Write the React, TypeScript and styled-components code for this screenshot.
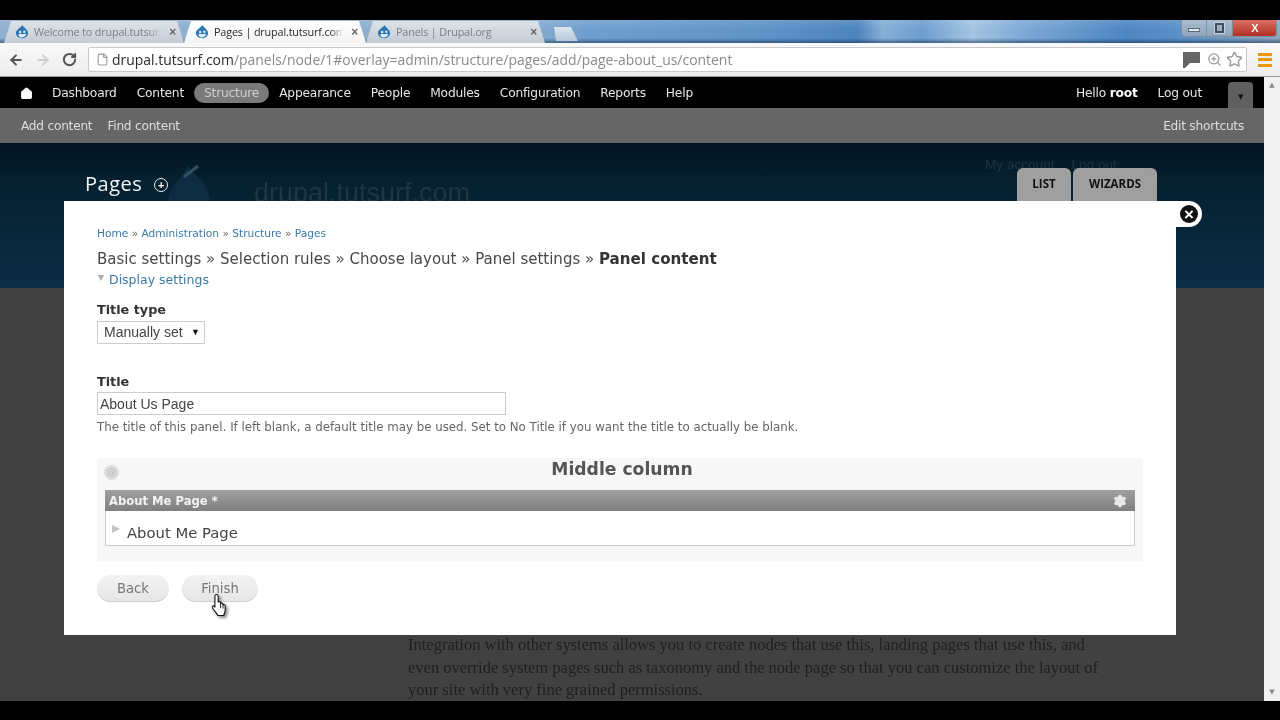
import React from "react";
import styled, { createGlobalStyle } from "styled-components";
import { ArrowLeft, ArrowRight, RotateCw, File, ZoomIn, Star, Home, Settings } from "lucide-react";

const Global = createGlobalStyle`
  html, body { margin: 0; padding: 0; background: #000; width: 1280px; height: 720px; overflow: hidden; }
  * { box-sizing: border-box; }
`;
const Screen = styled.div`
  width: 1280px; height: 720px; display: flex; flex-direction: column; background: #000;
  font-family: "DejaVu Sans", sans-serif; filter: blur(0.4px);
`;
const Letterbox = styled.div<{ $h: number }>`
  height: ${(p) => p.$h}px; flex: none; background: #000;
`;
const TabStrip = styled.div`
  height: 23px; flex: none; display: flex; align-items: flex-end; padding-left: 4px; position: relative;
  background:
    linear-gradient(rgba(255,255,255,.12) 0, rgba(255,255,255,0) 40%, rgba(0,0,0,0) 78%, rgba(20,45,75,.55) 100%),
    linear-gradient(90deg, #8fb0cf 0, #8fb0cf 40%, #6f9fd0 46%, #5f92c8 60%, #4d84bd 67%, #86b0d8 69%, #6d9dcf 72%, #a3c4e2 76%, #7da8d6 80%, #4c86c2 88%, #5a90c8 92%, #8fa8c0 100%);
`;
const Tab = styled.div<{ $active?: boolean; $w: number }>`
  width: ${(p) => p.$w}px; height: 22px; display: flex; align-items: center; gap: 5px; padding: 0 8px 1px 11px; flex: none;
  background: ${(p) => (p.$active ? "linear-gradient(#fff,#f4f4f4)" : "linear-gradient(#dde2e8,#c4ccd4)")};
  clip-path: polygon(7px 0, calc(100% - 7px) 0, 100% 100%, 0 100%);
  font: 10.8px "Open Sans", sans-serif; letter-spacing: -0.15px; color: ${(p) => (p.$active ? "#2a2a2a" : "#76818c")};
  white-space: nowrap;
`;
const TabTitle = styled.span`
  flex: 1; min-width: 0; white-space: nowrap;
  mask-image: linear-gradient(90deg, #000 calc(100% - 12px), transparent 100%);
`;
const TabClose = styled.span`
  font: bold 12px/1 "Liberation Sans", sans-serif; color: #666; flex: none; margin-left: 3px;
`;
const NewTab = styled.div`
  width: 28px; height: 14px; margin: 0 0 2px 5px;
  background: linear-gradient(#dbe5ee,#b6c8d8); clip-path: polygon(4px 0, calc(100% - 7px) 0, 100% 100%, 6px 100%);
`;
const WindowControls = styled.div`
  position: absolute; right: 3px; top: 0; width: 96px; height: 17px; display: flex;
  border: 1px solid #7f8fa2; border-top: none; border-radius: 0 0 4px 4px; overflow: hidden;
`;
const WinBtn = styled.div<{ $close?: boolean; $w: number }>`
  width: ${(p) => p.$w}px; flex: none; display: flex; align-items: center; justify-content: center;
  font: bold 11px "Liberation Sans", sans-serif; color: #f4f4f4;
  background: ${(p) => (p.$close ? "linear-gradient(#dc6f62,#b22f25)" : "linear-gradient(#a9bccf,#8ea5bd)")};
  border-right: 1px solid #7d8fa3;
`;
const MinGlyph = styled.span`
  width: 12px; height: 4px; background: #dfe6ec; margin-top: 3px; border: 1px solid #5c6b7a;
`;
const MaxGlyph = styled.span`
  width: 9px; height: 10px; border: 2px solid #3f4c59; outline: 1px solid #c5d0da;
`;
const Toolbar = styled.div`
  height: 34px; flex: none; display: flex; align-items: center; padding: 0 8px 0 8px;
  background: linear-gradient(#f9f9f9,#ededed); border-bottom: 1px solid #9a9a9a;
`;
const NavIcon = styled.span<{ $w: number; $c: string }>`
  width: ${(p) => p.$w}px; flex: none; display: flex; color: ${(p) => p.$c};
`;
const Omnibox = styled.div`
  width: 1159px; flex: none; height: 25px; display: flex; align-items: center; padding: 0 3px 0 7px;
  background: #fff; border: 1px solid #c9c9c9; border-radius: 2px;
  font: 13.95px/1 "Open Sans", sans-serif; color: #8a8a8a; white-space: nowrap;
`;
const UrlHost = styled.span`
  color: #2a2a2a; margin-left: 3px;
`;
const UrlFill = styled.span`
  flex: 1;
`;
const Menu = styled.div`
  width: 14px; height: 14px; margin-left: 11px; flex: none;
  background: repeating-linear-gradient(#e8980f 0 3px, #f5efdf 3px 5.5px);
`;
const Page = styled.div`
  flex: 1; display: flex; min-height: 0; position: relative; overflow: hidden;
`;
const PageMain = styled.div`
  flex: 1; display: flex; flex-direction: column; background: #414141; min-width: 0;
`;
const Scrollbar = styled.div`
  width: 16px; flex: none; background: #f1f1f1; display: flex; flex-direction: column; justify-content: space-between;
  align-items: center; padding: 5px 0; color: #888; font-size: 7px; line-height: 7px;
`;
const AdminBar = styled.div`
  height: 31px; flex: none; background: #000; display: flex; align-items: center; padding: 1px 11px 0 20px;
  color: #e6e6e6; font-size: 12.25px; letter-spacing: -0.2px; white-space: nowrap;
`;
const AdminItem = styled.span<{ $active?: boolean }>`
  padding: 3px 10px; border-radius: 10px;
  background: ${(p) => (p.$active ? "#7a7a7a" : "transparent")};
  color: ${(p) => (p.$active ? "#cfcfcf" : "#e6e6e6")};
`;
const HomeIcon = styled.span`
  display: flex; width: 22px; color: #fff;
`;
const Spacer = styled.span`
  flex: 1;
`;
const Hello = styled.span`
  margin-right: 20px;
  b { color: #fff; }
`;
const Dropdown = styled.div`
  width: 25px; height: 26px; margin-left: 26px; align-self: flex-end; background: #5f5f5f; border-radius: 4px 4px 0 0;
  color: #111; font-size: 7px; display: flex; align-items: center; justify-content: center; padding-top: 3px;
`;
const ShortcutBar = styled.div`
  height: 35px; flex: none; background: #666; display: flex; align-items: center; padding: 1px 20px 0 21px; gap: 15px;
  color: #dedede; font-size: 12.2px; letter-spacing: -0.25px; white-space: nowrap;
`;
const Header = styled.div`
  height: 145px; flex: none; position: relative; overflow: hidden;
  background: linear-gradient(#021420 0, #05202f 25%, #0b2e46 100%);
`;
const HeaderTop = styled.div`
  display: flex; align-items: flex-start; padding: 16px 108px 0 85px; position: relative;
`;
const PageTitle = styled.div`
  font: 400 20px/1 "Open Sans", sans-serif; color: #f2f5f7; margin-top: 15px; letter-spacing: 0.5px;
`;
const AddIcon = styled.span`
  width: 14px; height: 14px; margin: 19px 0 0 12px; border-radius: 50%; border: 1.5px solid #e8edf0;
  display: flex; align-items: center; justify-content: center; flex: none; position: relative;
  &::after { content: "+"; font: bold 11px/1 "Liberation Sans", sans-serif; color: #fff; }
`;
const Watermark = styled.svg`
  position: absolute; left: 160px; top: 20px;
`;
const SiteName = styled.div`
  position: absolute; left: 254px; top: 37px; font: 27px/1 "Liberation Sans", sans-serif; color: #1f3645;
`;
const SecondaryLinks = styled.div`
  position: absolute; left: 985px; top: 15px; display: flex; gap: 17px;
  font: 13.6px/1 "Liberation Sans", sans-serif; color: #1f3645;
`;
const Tabs = styled.div`
  position: absolute; left: 1017px; top: 25px; display: flex; gap: 2px;
`;
const SecTab = styled.div<{ $w: number }>`
  width: ${(p) => p.$w}px; height: 33px; background: #9f9f9f; border-radius: 6px 6px 0 0; display: flex;
  align-items: center; justify-content: center; color: #111; padding-bottom: 3px;
  font: 700 11.5px "Open Sans", sans-serif;
`;
const Body = styled.div`
  flex: 1; position: relative; overflow: hidden; padding: 346px 0 0 408px;
`;
const BodyText = styled.p`
  margin: 0; width: 700px; font: 16.5px/22.5px "Liberation Serif", serif; color: #1e1e1e;
`;
const Overlay = styled.div`
  position: absolute; left: 64px; top: 124px; width: 1112px; height: 434px; background: #fff;
  padding: 24px 33px 0; color: #444; font-size: 13px;
`;
const OverlayClose = styled.div`
  position: absolute; right: -26px; top: 0; width: 26px; height: 26px; background: #fff; border-radius: 0 13px 13px 0;
  display: flex; align-items: center; padding-left: 4px;
`;
const CloseDisc = styled.div`
  width: 18px; height: 18px; border-radius: 50%; background: #111; color: #fff;
  display: flex; align-items: center; justify-content: center; font: bold 17px/1 "Liberation Sans", sans-serif;
`;
const Breadcrumb = styled.div`
  font: 10.6px/16px "DejaVu Sans", sans-serif; color: #3a7aa6; white-space: nowrap;
  span { color: #666; }
`;
const Steps = styled.div`
  font: 15px/20px "DejaVu Sans", sans-serif; color: #484848; margin-top: 8px; white-space: nowrap;
  b { color: #333; font-weight: 700; font-size: 15.1px; }
`;
const Fieldset = styled.div`
  display: flex; align-items: center; gap: 4px; margin-top: 2px;
  font: 12.5px/18px "DejaVu Sans", sans-serif; color: #3a7aa6;
`;
const Tri = styled.span`
  width: 0; height: 0; border-left: 3.5px solid transparent; border-right: 3.5px solid transparent;
  border-top: 6px solid #aaa; margin: 0 1px 4px 1px;
`;
const Label = styled.div`
  font: 700 12.8px/18px "DejaVu Sans", sans-serif; color: #333;
`;
const SelectBox = styled.div`
  width: 108px; height: 23px; margin-top: 2px; border: 1px solid #ccc; display: flex; align-items: center;
  justify-content: space-between; padding: 0 4px 2px 6px; font: 14px "Liberation Sans", sans-serif; color: #444;
`;
const Caret = styled.span`
  color: #111; font-size: 9px;
`;
const TextInput = styled.div`
  width: 409px; height: 23px; margin-top: 1px; border: 1px solid #ccc; display: flex; align-items: center;
  padding-left: 2px; font: 14px "Liberation Sans", sans-serif; color: #444;
`;
const Help = styled.div`
  font: 11.8px/16px "DejaVu Sans", sans-serif; color: #666; margin-top: 4px; white-space: nowrap;
`;
const Section = styled.div<{ $top: number }>`
  margin-top: ${(p) => p.$top}px;
`;
const Region = styled.div`
  margin-top: 23px; width: 1046px; height: 103px; background: #f7f7f7; padding: 0 8px; position: relative;
`;
const RegionGear = styled.span`
  position: absolute; left: 7px; top: 7px; width: 15px; height: 15px; border-radius: 50%; background: #ddd; color: #bbb; display: flex;
  align-items: center; justify-content: center;
`;
const RegionTitle = styled.div`
  text-align: center; font: 700 17.2px/22px "DejaVu Sans", sans-serif; color: #555; height: 32px; padding-left: 4px;
`;
const Pane = styled.div`
  border: 1px solid #ccc; border-top: none; background: #fff; height: 56px;
`;
const PaneHead = styled.div`
  height: 21px; margin: 0 -1px; background: linear-gradient(#a0a0a0,#7f7f7f); display: flex; align-items: center;
  justify-content: space-between; padding: 0 8px 0 4px; color: #f2f2f2; font: 700 11.6px "DejaVu Sans", sans-serif;
`;
const GearIcon = styled.span`
  display: flex; color: #e8e8e8;
`;
const PaneBody = styled.div`
  display: flex; padding: 11px 0 0 6px; font: 14.8px/22px "DejaVu Sans", sans-serif; color: #444;
`;
const PaneTri = styled.span`
  width: 0; height: 0; border-top: 4px solid transparent; border-bottom: 4px solid transparent; border-left: 8px solid #c4c4c4;
  margin: 3px 7px 0 0;
`;
const Buttons = styled.div`
  display: flex; gap: 13px; margin-top: 14px; position: relative;
`;
const Pill = styled.div<{ $w: number }>`
  width: ${(p) => p.$w}px; height: 27px; border-radius: 14px; background: linear-gradient(#f3f3f3,#e6e6e6);
  border-bottom: 1px solid #ccc; display: flex; align-items: center; justify-content: center;
  font: 13.2px "DejaVu Sans", sans-serif; color: #777;
`;
const Cursor = styled.svg`
  position: absolute; left: 114px; top: 18px; filter: drop-shadow(2px 2px 1.5px rgba(0,0,0,.45));
`;

const DrupalDrop = () => (
  <svg width="14" height="15" viewBox="0 0 15 15" style={{ flex: "none" }}>
    <path d="M8 .5C8.6 3 14 5 14 9.3A6.5 5.5 0 0 1 1 9.3C1 5 7 3 8 .5Z" fill="#2a78b4" />
    <path d="M3.5 11C5 9 6.5 10.5 8 10.5C9.5 10.5 11 9 12 10.5C11.5 13 9 14 7 14C5.5 14 4 13 3.5 11Z" fill="#dfeaf2" />
    <circle cx="5.5" cy="8" r="1.3" fill="#dfeaf2" />
    <circle cx="10" cy="7.8" r="1.3" fill="#dfeaf2" />
  </svg>
);

export default function App() {
  return (
    <Screen>
      <Global />
      <Letterbox $h={20} />
      <TabStrip>
        <Tab $w={180}><DrupalDrop /><TabTitle>Welcome to drupal.tutsur</TabTitle><TabClose>×</TabClose></Tab>
        <Tab $active $w={182}><DrupalDrop /><TabTitle>Pages | drupal.tutsurf.com</TabTitle><TabClose>×</TabClose></Tab>
        <Tab $w={179}><DrupalDrop /><TabTitle>Panels | Drupal.org</TabTitle><TabClose>×</TabClose></Tab>
        <NewTab />
        <WindowControls>
          <WinBtn $w={25}><MinGlyph /></WinBtn>
          <WinBtn $w={26}><MaxGlyph /></WinBtn>
          <WinBtn $w={45} $close>X</WinBtn>
        </WindowControls>
      </TabStrip>
      <Toolbar>
        <NavIcon $w={27} $c="#555"><ArrowLeft size={16} strokeWidth={3} /></NavIcon>
        <NavIcon $w={27} $c="#cfcfcf"><ArrowRight size={16} strokeWidth={3} /></NavIcon>
        <NavIcon $w={26} $c="#555"><RotateCw size={15} strokeWidth={3.2} /></NavIcon>
        <Omnibox>
          <File size={13} color="#999" />
          <UrlHost>drupal.tutsurf.com</UrlHost>/panels/node/1#overlay=admin/structure/pages/add/page-about_us/content
          <UrlFill />
          <svg width="20" height="18" viewBox="0 0 20 18"><path d="M2 1H19V12H9L4 17H2Z" fill="#666" /></svg>
          <ZoomIn size={15} color="#999" style={{ marginLeft: 6 }} />
          <Star size={17} color="#999" style={{ marginLeft: 4 }} />
        </Omnibox>
        <Menu />
      </Toolbar>
      <Page>
        <PageMain>
          <AdminBar>
            <HomeIcon><Home size={13} fill="#fff" /></HomeIcon>
            <AdminItem>Dashboard</AdminItem>
            <AdminItem>Content</AdminItem>
            <AdminItem $active>Structure</AdminItem>
            <AdminItem>Appearance</AdminItem>
            <AdminItem>People</AdminItem>
            <AdminItem>Modules</AdminItem>
            <AdminItem>Configuration</AdminItem>
            <AdminItem>Reports</AdminItem>
            <AdminItem>Help</AdminItem>
            <Spacer />
            <Hello>Hello <b>root</b></Hello>
            <span>Log out</span>
            <Dropdown>▼</Dropdown>
          </AdminBar>
          <ShortcutBar>
            <span>Add content</span>
            <span>Find content</span>
            <Spacer />
            <span>Edit shortcuts</span>
          </ShortcutBar>
          <Header>
            <Watermark width="55" height="40" viewBox="0 0 55 40">
              <path d="M28 2C30 10 50 18 50 40H8C8 22 25 14 28 2Z" fill="#0f2d42" />
              <path d="M24 14L38 3" stroke="#34505f" strokeWidth="3" fill="none" />
            </Watermark>
            <HeaderTop>
              <PageTitle>Pages</PageTitle>
              <AddIcon />
            </HeaderTop>
            <SiteName>drupal.tutsurf.com</SiteName>
            <SecondaryLinks><span>My account</span><span>Log out</span></SecondaryLinks>
            <Tabs>
              <SecTab $w={54}>LIST</SecTab>
              <SecTab $w={84}>WIZARDS</SecTab>
            </Tabs>
          </Header>
          <Body>
            <BodyText>
              Integration with other systems allows you to create nodes that use this, landing pages that use this, and
              even override system pages such as taxonomy and the node page so that you can customize the layout of
              your site with very fine grained permissions.
            </BodyText>
          </Body>
        </PageMain>
        <Scrollbar><span>▲</span><span>▼</span></Scrollbar>
        <Overlay>
          <OverlayClose><CloseDisc>×</CloseDisc></OverlayClose>
          <Breadcrumb>Home <span>»</span> Administration <span>»</span> Structure <span>»</span> Pages</Breadcrumb>
          <Steps>Basic settings » Selection rules » Choose layout » Panel settings » <b>Panel content</b></Steps>
          <Fieldset><Tri />Display settings</Fieldset>
          <Section $top={12}>
            <Label>Title type</Label>
            <SelectBox>Manually set<Caret>▼</Caret></SelectBox>
          </Section>
          <Section $top={29}>
            <Label>Title</Label>
            <TextInput>About Us Page</TextInput>
            <Help>The title of this panel. If left blank, a default title may be used. Set to No Title if you want the title to actually be blank.</Help>
          </Section>
          <Region>
            <RegionGear><Settings size={11} /></RegionGear>
            <RegionTitle>Middle column</RegionTitle>
            <Pane>
              <PaneHead>About Me Page *<GearIcon><Settings size={14} fill="#e8e8e8" color="#e8e8e8" /></GearIcon></PaneHead>
              <PaneBody><PaneTri />About Me Page</PaneBody>
            </Pane>
          </Region>
          <Buttons>
            <Pill $w={72}>Back</Pill>
            <Pill $w={76}>Finish</Pill>
            <Cursor width="18" height="24" viewBox="0 0 18 24">
              <path d="M5.5 1.5c1 0 1.7.7 1.7 1.7V9c1.2-.6 2.300-.2 2.400.8v.6c1.100-.6 2.200-.2 2.400.8v.6c1-.5 2.200 0 2.200 1.200V17c0 2-1 3.500-1.500 5.500H6.800C6 20.500 3 17.500 1.500 15c-.8-1.400.5-2.700 1.700-1.800l.7.9V3.200c0-1 .6-1.700 1.600-1.700Z" fill="#fff" stroke="#111" strokeWidth="1.1" strokeLinejoin="round" />
              <path d="M9.600 11v4M12 11.500v4" stroke="#111" strokeWidth=".9" />
            </Cursor>
          </Buttons>
        </Overlay>
      </Page>
      <Letterbox $h={19} />
    </Screen>
  );
}
